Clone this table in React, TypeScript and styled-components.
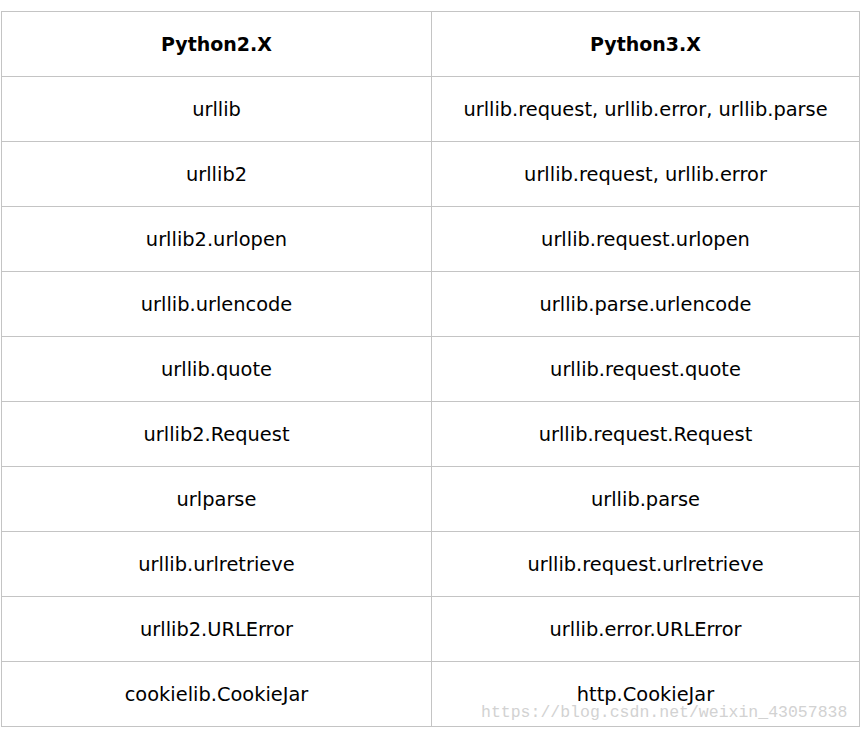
import React from "react";
import styled, { createGlobalStyle } from "styled-components";

const Global = createGlobalStyle`
  html, body { margin: 0; padding: 0; background: #fff; }
  body { font-family: "DejaVu Sans", Verdana, sans-serif; color: #000; }
`;

const Page = styled.div`
  position: relative;
  width: 862px;
  height: 734px;
  padding: 11px 0 0 1px;
  box-sizing: border-box;
`;

const Table = styled.table`
  border-collapse: collapse;
  width: 859px;
  table-layout: fixed;
`;

const HeadCell = styled.th`
  border: 1px solid #c4c4c4;
  height: 64px;
  padding: 0;
  font-size: 19px;
  font-weight: bold;
  text-align: center;
  vertical-align: middle;
`;

const Cell = styled.td`
  border: 1px solid #c4c4c4;
  height: 64px;
  padding: 0;
  font-size: 19.4px;
  text-align: center;
  vertical-align: middle;
`;

const Watermark = styled.div`
  position: absolute;
  left: 481px;
  top: 703px;
  font-family: "Liberation Mono", monospace;
  font-size: 16.5px;
  color: #d2d2d2;
  white-space: nowrap;
  pointer-events: none;
`;

const rows: [string, string][] = [
  ["urllib", "urllib.request, urllib.error, urllib.parse"],
  ["urllib2", "urllib.request, urllib.error"],
  ["urllib2.urlopen", "urllib.request.urlopen"],
  ["urllib.urlencode", "urllib.parse.urlencode"],
  ["urllib.quote", "urllib.request.quote"],
  ["urllib2.Request", "urllib.request.Request"],
  ["urlparse", "urllib.parse"],
  ["urllib.urlretrieve", "urllib.request.urlretrieve"],
  ["urllib2.URLError", "urllib.error.URLError"],
  ["cookielib.CookieJar", "http.CookieJar"],
];

export default function App() {
  return (
    <Page>
      <Global />
      <Table>
        <colgroup>
          <col style={{ width: 430 }} />
          <col style={{ width: 428 }} />
        </colgroup>
        <thead>
          <tr>
            <HeadCell>Python2.X</HeadCell>
            <HeadCell>Python3.X</HeadCell>
          </tr>
        </thead>
        <tbody>
          {rows.map(([a, b]) => (
            <tr key={a}>
              <Cell>{a}</Cell>
              <Cell>{b}</Cell>
            </tr>
          ))}
        </tbody>
      </Table>
      <Watermark>https://blog.csdn.net/weixin_43057838</Watermark>
    </Page>
  );
}
